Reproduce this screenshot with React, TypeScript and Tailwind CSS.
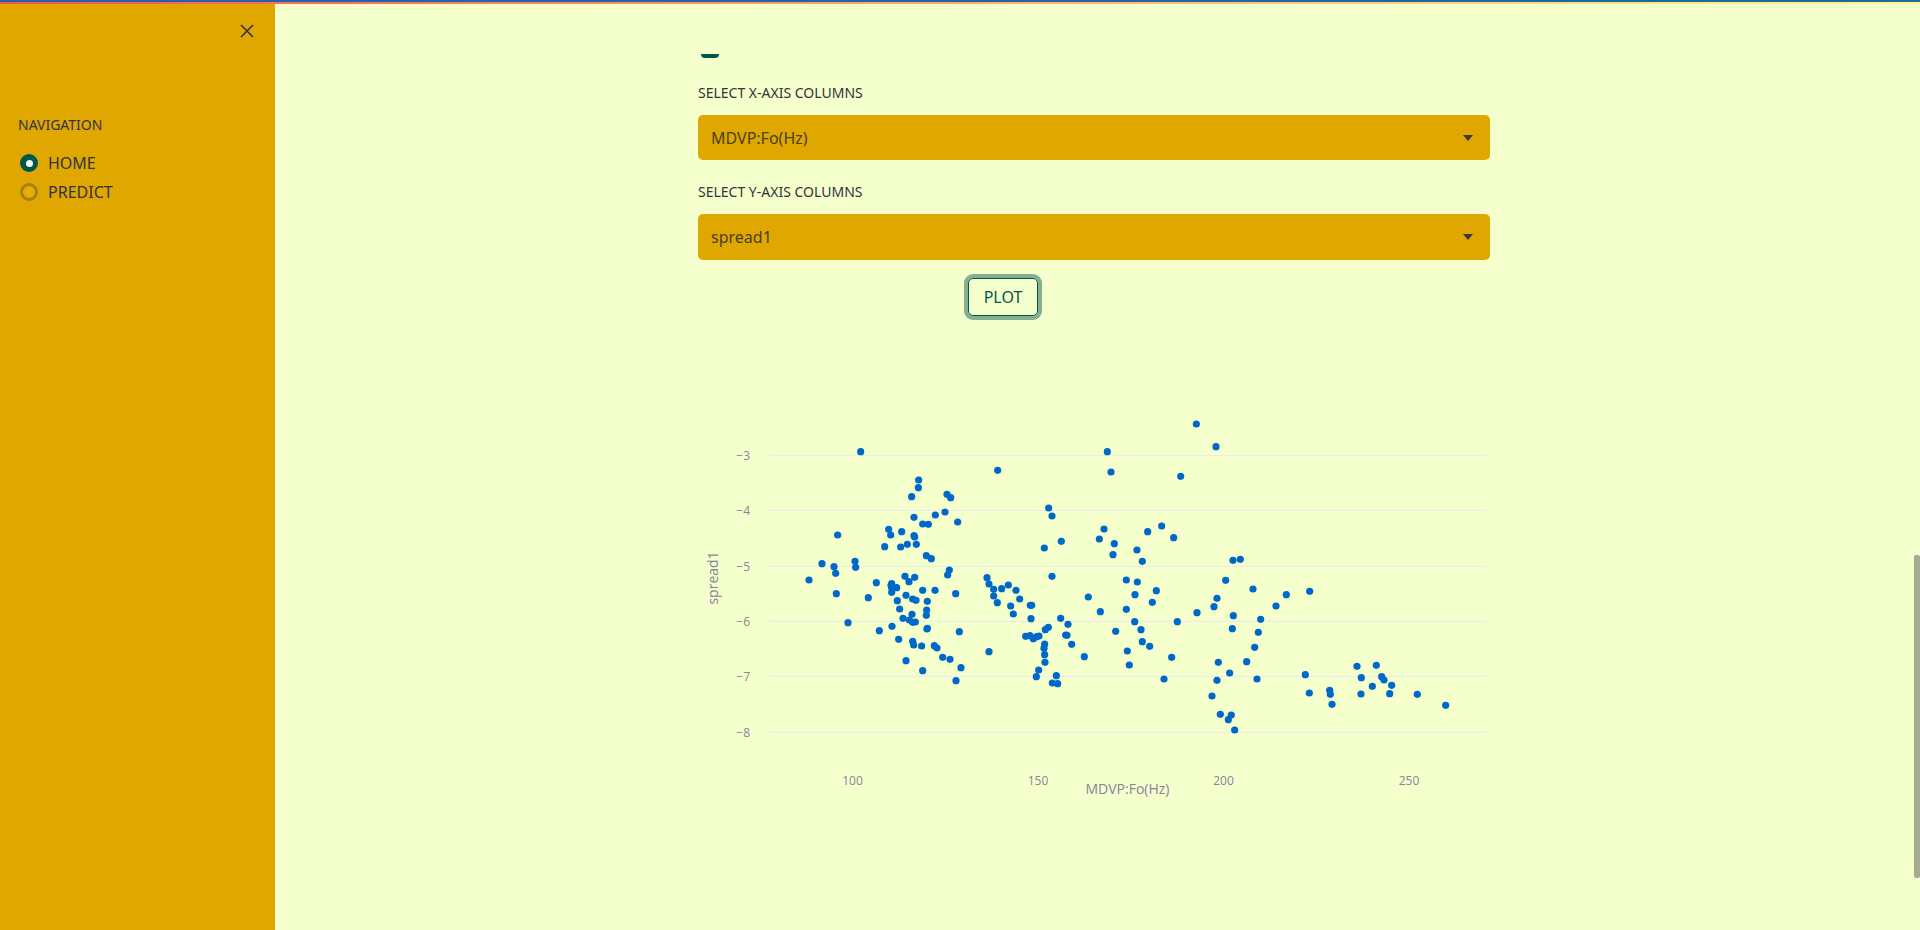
const a = [[512,155],[686,240],[685,263],[665,290],[771,283],[782,293],[923,211],[736,345],[765,336],[672,352],[698,372],[715,373],[803,366],[1076,324],[1086,348],[596,388],[602,405],[443,405],[635,395],[672,407],[674,411],[584,440],[632,441],[652,433],[679,433],[1063,444],[1114,424],[709,467],[724,476],[396,491],[432,500],[495,484],[497,502],[778,510],[773,525],[357,540],[437,520],[645,529],[674,532],[657,545],[559,548],[605,551],[603,556],[605,563],[620,563],[605,577],[891,533],[897,552],[911,568],[935,566],[955,555],[978,571],[1086,529],[439,581],[698,571],[735,571],[797,581],[648,586],[535,593],[668,597],[678,601],[622,602],[712,604],[911,588],[989,597],[922,608],[962,618],[1021,616],[1025,616],[1195,591],[629,627],[710,630]];
const b = [[666,73],[709,76],[639,85],[658,90],[668,97],[676,96],[606,109],[474,98],[568,122],[712,115],[711,117],[808,125],[626,148],[668,154],[671,165],[695,168],[733,167],[741,174],[758,202],[780,208],[648,212],[813,233],[698,242],[798,272],[970,72],[1023,86],[1112,85],[1134,103],[1075,112],[1066,119],[1007,139],[1020,137],[1030,146],[1040,140],[1047,138],[1064,162],[1062,175],[1127,135],[1131,136],[1064,194],[1065,217],[1145,163],[897,185],[1183,200],[1046,240],[1039,260],[1099,257],[1087,279],[1103,281]];
const c = [[319,72],[378,140],[52,155],[63,216],[272,229],[42,387],[215,378],[173,395],[28,417],[251,413],[73,431],[69,464],[141,450],[157,484],[429,481],[451,478],[109,540],[142,546],[407,541],[489,567],[199,572],[135,584],[589,584],[659,574],[187,607],[381,595],[558,618],[372,620],[109,628]];
const d = [[31,65],[321,68],[430,77],[512,88],[262,95],[134,95],[77,124],[153,119],[427,116],[505,127],[157,155],[179,169],[494,172],[112,183],[245,202],[470,215],[385,217],[118,225],[419,249],[222,267],[381,271],[501,267],[646,254],[801,229],[859,226],[814,263],[875,260],[882,270],[905,286],[847,289],[719,301],[721,313],[658,309],[813,312],[899,311],[982,313],[726,343],[1067,346],[366,318],[391,373],[424,375],[415,389],[434,420]];

const toPage = (list: number[][], ox: number, oy: number) => list.map(([x, y]) => [ox + x / 3, oy + y / 3]);
const points = [...toPage(a, 690, 400), ...toPage(b, 690, 590), ...toPage(c, 1090, 400), ...toPage(d, 1090, 590)];

const yTicks = [
  { label: "\u22123", y: 455.3 },
  { label: "\u22124", y: 510.3 },
  { label: "\u22125", y: 566.3 },
  { label: "\u22126", y: 621.3 },
  { label: "\u22127", y: 676.3 },
  { label: "\u22128", y: 732.3 },
];
const xTicks = [
  { label: "100", x: 852.5 },
  { label: "150", x: 1038 },
  { label: "200", x: 1223.5 },
  { label: "250", x: 1409 },
];

function Select({ label, value, boxHeight }: { label: string; value: string; boxHeight: string }) {
  return (
    <div className="flex flex-col">
      <label className="h-[20px] text-[14px] leading-[20px] mb-[12px] text-[#31333f]">{label}</label>
      <div className={boxHeight + " bg-[#dfa700] rounded-[5px] pl-[13px] pr-[17px] flex items-center justify-between text-[16px] text-[#4a3f1f]"}>
        <span>{value}</span>
        <svg width="10" height="6" viewBox="0 0 10 6">
          <path d="M0 0h10L5 6z" fill="#3a3a3f" />
        </svg>
      </div>
    </div>
  );
}

function Chart() {
  return (
    <svg className="block mt-[14px]" width="792" height="500" viewBox="698 330 792 500" fontFamily="'Open Sans', sans-serif">
      {yTicks.map((t) => (
        <g key={t.label}>
          <line x1="769" x2="1486" y1={t.y} y2={t.y} stroke="#e6e8f5" strokeWidth="1" />
          <text x="750" y={t.y + 4.5} textAnchor="end" fontSize="12" fill="#85859a">{t.label}</text>
        </g>
      ))}
      {xTicks.map((t) => (
        <text key={t.label} x={t.x} y="785" textAnchor="middle" fontSize="12" fill="#85859a">{t.label}</text>
      ))}
      <text x="1127.5" y="794" textAnchor="middle" fontSize="14" fill="#85859a">MDVP:Fo(Hz)</text>
      <text transform="translate(718 578) rotate(-90)" textAnchor="middle" fontSize="14" fill="#85859a">spread1</text>
      {points.map(([x, y], i) => (
        <circle key={i} cx={x} cy={y} r="3.6" fill="#0068c9" />
      ))}
    </svg>
  );
}

export default function App() {
  return (
    <div className="relative h-screen w-full flex overflow-hidden bg-[#f5ffcc] text-[#31333f] font-['Noto_Sans',sans-serif]">
      {/* top decoration */}
      <div className="absolute top-0 left-0 right-0 z-10">
        <div className="h-[2px] bg-[#1d66ad]" />
        <div className="h-[2px] bg-linear-to-r from-[#ff4b4b] to-[#fffd80]" />
      </div>

      <aside className="w-[275px] shrink-0 bg-[#dfa700] pt-[24px]">
        <div className="flex justify-end pr-[21px]">
          <svg width="14" height="14" viewBox="0 0 14 14" fill="none" stroke="#31333f" strokeWidth="1.6">
            <path d="M1 1l12 12M13 1L1 13" />
          </svg>
        </div>
        <div className="mt-[77px] pl-[18px]">
          <div className="h-[20px] text-[14px] leading-[20px]">NAVIGATION</div>
          <div className="mt-[19px] flex flex-col gap-[11px] pl-[2px] text-[16px]">
            <div className="flex items-center h-[18px]">
              <span className="w-[18px] h-[18px] rounded-full bg-[#00574b] flex items-center justify-center">
                <span className="w-[7px] h-[7px] rounded-full bg-[#f5f7f2]" />
              </span>
              <span className="ml-[10px]">HOME</span>
            </div>
            <div className="flex items-center h-[18px]">
              <span className="w-[18px] h-[18px] rounded-full border-[3px] border-[#a67f14] bg-[#e8ad00]" />
              <span className="ml-[10px]">PREDICT</span>
            </div>
          </div>
        </div>
      </aside>

      <main className="flex-1 min-w-0 pl-[423px] pt-[54px]">
        <div className="w-[792px]">
          {/* bottom of the heading scrolled out of view */}
          <div className="ml-[3px] w-[18px] h-[4px] bg-[#00574b] rounded-b-[5px]" />
          <div className="mt-[25px]">
            <Select label="SELECT X-AXIS COLUMNS" value="MDVP:Fo(Hz)" boxHeight="h-[45px]" />
          </div>
          <div className="mt-[22px]">
            <Select label="SELECT Y-AXIS COLUMNS" value="spread1" boxHeight="h-[46px]" />
          </div>
          <div className="mt-[18px] pl-[270px]">
            <button className="w-[70px] h-[38px] rounded-[5px] border-[1.5px] border-[#00574b] ring-[4px] ring-[#86ae90] text-[#00574b] text-[16px] flex items-center justify-center">
              PLOT
            </button>
          </div>
          <Chart />
        </div>
      </main>

      {/* scrollbar thumb */}
      <div className="absolute right-0 top-[555px] w-[6px] h-[323px] rounded-[2px] bg-[#a6ab93]" />
    </div>
  );
}
